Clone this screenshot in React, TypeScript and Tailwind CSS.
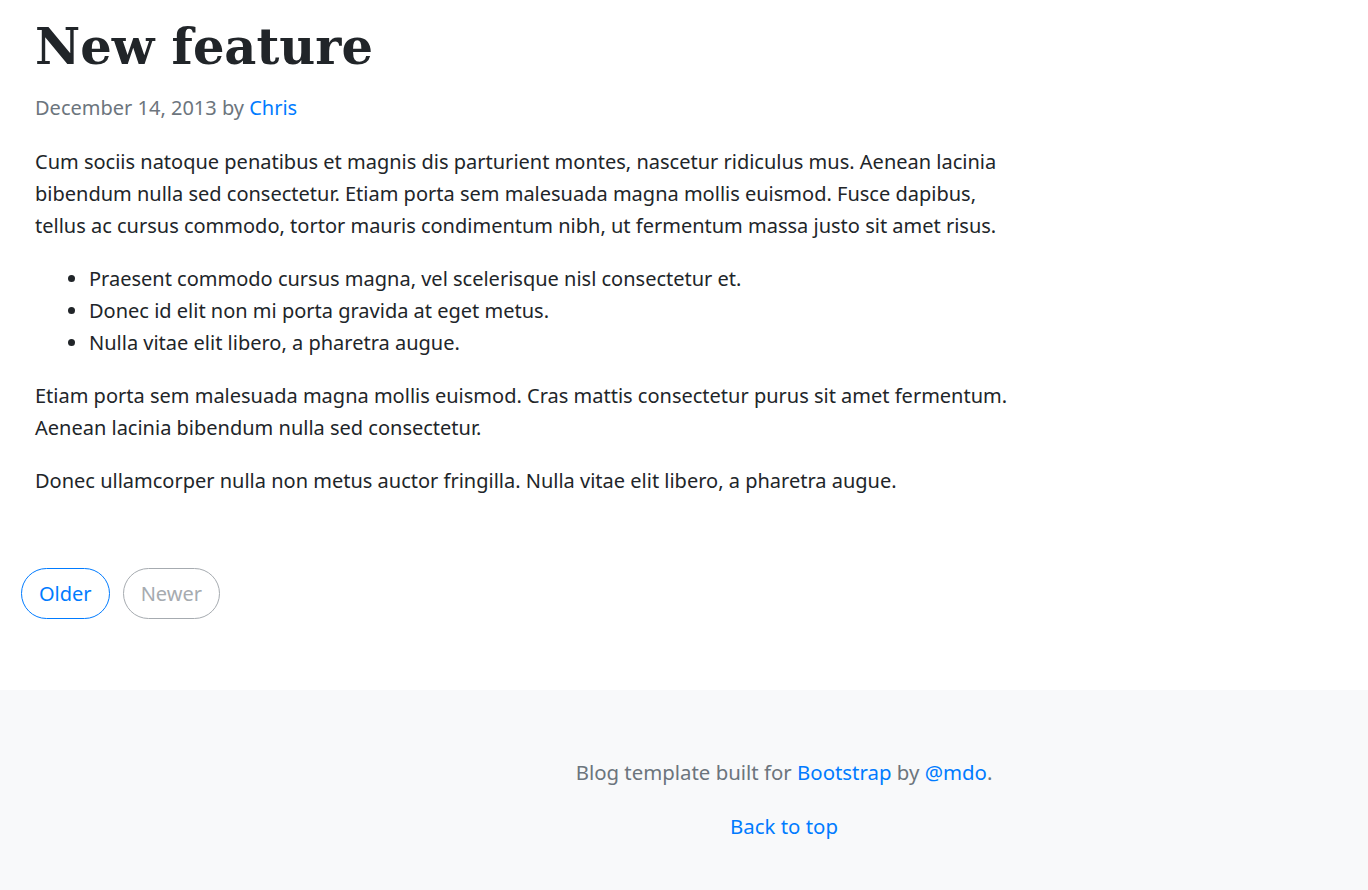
import React from 'react';

const body = { fontFamily: '"Noto Sans", "Open Sans", sans-serif' };

export default function App() {
  return (
    <div className="min-h-screen bg-white text-[#212529] flex flex-col" style={body}>
      <main className="pl-[35px] pr-[348px] pt-[14px] pb-[71px]">
        <h1
          className="text-[49.5px] leading-[66px] font-bold text-[#212529]"
          style={{ fontFamily: '"DejaVu Serif", Georgia, serif' }}
        >
          New feature
        </h1>
        <p className="mt-[12px] text-[20px] leading-[32px] text-[#6c757d]">
          December 14, 2013 by <a href="#" className="text-[#007bff]">Chris</a>
        </p>
        <div className="mt-[22px] text-[20px] leading-[32px] flex flex-col gap-[21px]">
          <p>
            Cum sociis natoque penatibus et magnis dis parturient montes, nascetur ridiculus mus. Aenean lacinia
            bibendum nulla sed consectetur. Etiam porta sem malesuada magna mollis euismod. Fusce dapibus, tellus ac
            cursus commodo, tortor mauris condimentum nibh, ut fermentum massa justo sit amet risus.
          </p>
          <ul className="list-disc pl-[54px]">
            <li>Praesent commodo cursus magna, vel scelerisque nisl consectetur et.</li>
            <li>Donec id elit non mi porta gravida at eget metus.</li>
            <li>Nulla vitae elit libero, a pharetra augue.</li>
          </ul>
          <p>
            Etiam porta sem malesuada magna mollis euismod. Cras mattis consectetur purus sit amet fermentum. Aenean
            lacinia bibendum nulla sed consectetur.
          </p>
          <p>Donec ullamcorper nulla non metus auctor fringilla. Nulla vitae elit libero, a pharetra augue.</p>
        </div>
      </main>
      <nav className="pl-[21px] flex gap-[13px] pb-[71px]">
        <a
          href="#"
          className="h-[51px] px-[17px] flex items-center rounded-full border border-[#007bff] text-[#007bff] text-[20px]"
        >
          Older
        </a>
        <span className="h-[51px] px-[17px] flex items-center rounded-full border border-[#a6abb0] text-[#a6abb0] text-[20px]">
          Newer
        </span>
      </nav>
      <footer className="flex-1 bg-[#f8f9fa] pl-[200px] pt-[66px] pb-[64px] text-center text-[20.4px] leading-[32px] text-[#6c757d]">
        <p>
          Blog template built for <a href="#" className="text-[#007bff]">Bootstrap</a> by{' '}
          <a href="#" className="text-[#007bff]">@mdo</a>.
        </p>
        <p className="mt-[22px]">
          <a href="#" className="text-[#007bff]">Back to top</a>
        </p>
      </footer>
    </div>
  );
}
